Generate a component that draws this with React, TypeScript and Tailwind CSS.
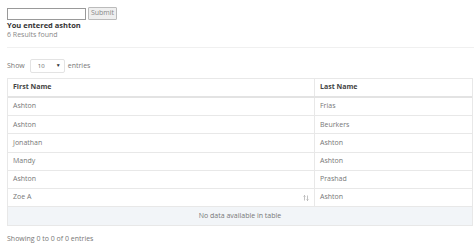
import React from "react";

const rows: [string, string][] = [
  ["Ashton", "Frias"],
  ["Ashton", "Beurkers"],
  ["Jonathan", "Ashton"],
  ["Mandy", "Ashton"],
  ["Ashton", "Prashad"],
  ["Zoe A", "Ashton"],
];

export default function App() {
  return (
    <div
      className="w-[474px] h-[244px] bg-white text-[#777] text-[7px] overflow-hidden"
      style={{ fontFamily: '"Open Sans", "Noto Sans", sans-serif' }}
    >
      <div className="pl-[7px] pt-[7px]">
        <div className="flex items-center gap-[2px]">
          <div className="w-[79px] h-[12px] border border-[#999] bg-white" />
          <div className="h-[13px] w-[29px] border border-[#bbb] bg-[#efefef] text-[#888] flex items-center justify-center text-[7px] rounded-[1px]">
            Submit
          </div>
        </div>
        <div className="font-bold text-[#333] text-[7.5px] leading-[9px] mt-[1px]">You entered ashton</div>
        <div className="text-[#888] leading-[9px]">6 Results found</div>
      </div>
      <div className="mt-[8px] h-px bg-[#f0f0f0] ml-[7px]" />
      <div className="pl-[7px] mt-[11px] flex items-center h-[14px]">
        <span>Show</span>
        <div className="ml-[5px] w-[35px] h-[14px] border border-[#e3e3e3] rounded-[2px] flex items-center justify-between pl-[7px] pr-[3px] text-[6px] text-[#666]">
          <span>10</span>
          <span className="text-[5px] text-[#333]">▼</span>
        </div>
        <span className="ml-[3px]">entries</span>
      </div>
      <div className="ml-[7px] mt-[5px] w-[466px] border border-[#e8e8e8]">
        <div className="flex h-[19px] border-b-2 border-[#e3e3e3] font-bold text-[#444]">
          <div className="w-[307px] border-r border-[#e8e8e8] flex items-center pl-[5px]">First Name</div>
          <div className="flex-1 flex items-center pl-[5px]">Last Name</div>
        </div>
        {rows.map(([f, l], i) => (
          <div key={i} className="flex h-[18.2px] border-b border-[#e8e8e8] text-[#777]">
            <div className="w-[307px] border-r border-[#e8e8e8] flex items-center justify-between pl-[5px] pr-[5px]">
              <span>{f}</span>
              {i === 5 && (
                <svg width="6" height="6" viewBox="0 0 6 6" className="text-[#999]">
                  <path d="M1.5 0.5 V5.5 M0.5 1.5 L1.5 0.5 L2.5 1.5" stroke="currentColor" strokeWidth="0.6" fill="none" />
                  <path d="M4.5 0.5 V5.5 M3.5 4.5 L4.5 5.5 L5.5 4.5" stroke="currentColor" strokeWidth="0.6" fill="none" />
                </svg>
              )}
            </div>
            <div className="flex-1 flex items-center pl-[5px]">{l}</div>
          </div>
        ))}
        <div className="h-[18px] bg-[#f2f5f8] flex items-center justify-center text-[#777]">
          No data available in table
        </div>
      </div>
      <div className="pl-[7px] mt-[8px] text-[#777]">Showing 0 to 0 of 0 entries</div>
    </div>
  );
}
